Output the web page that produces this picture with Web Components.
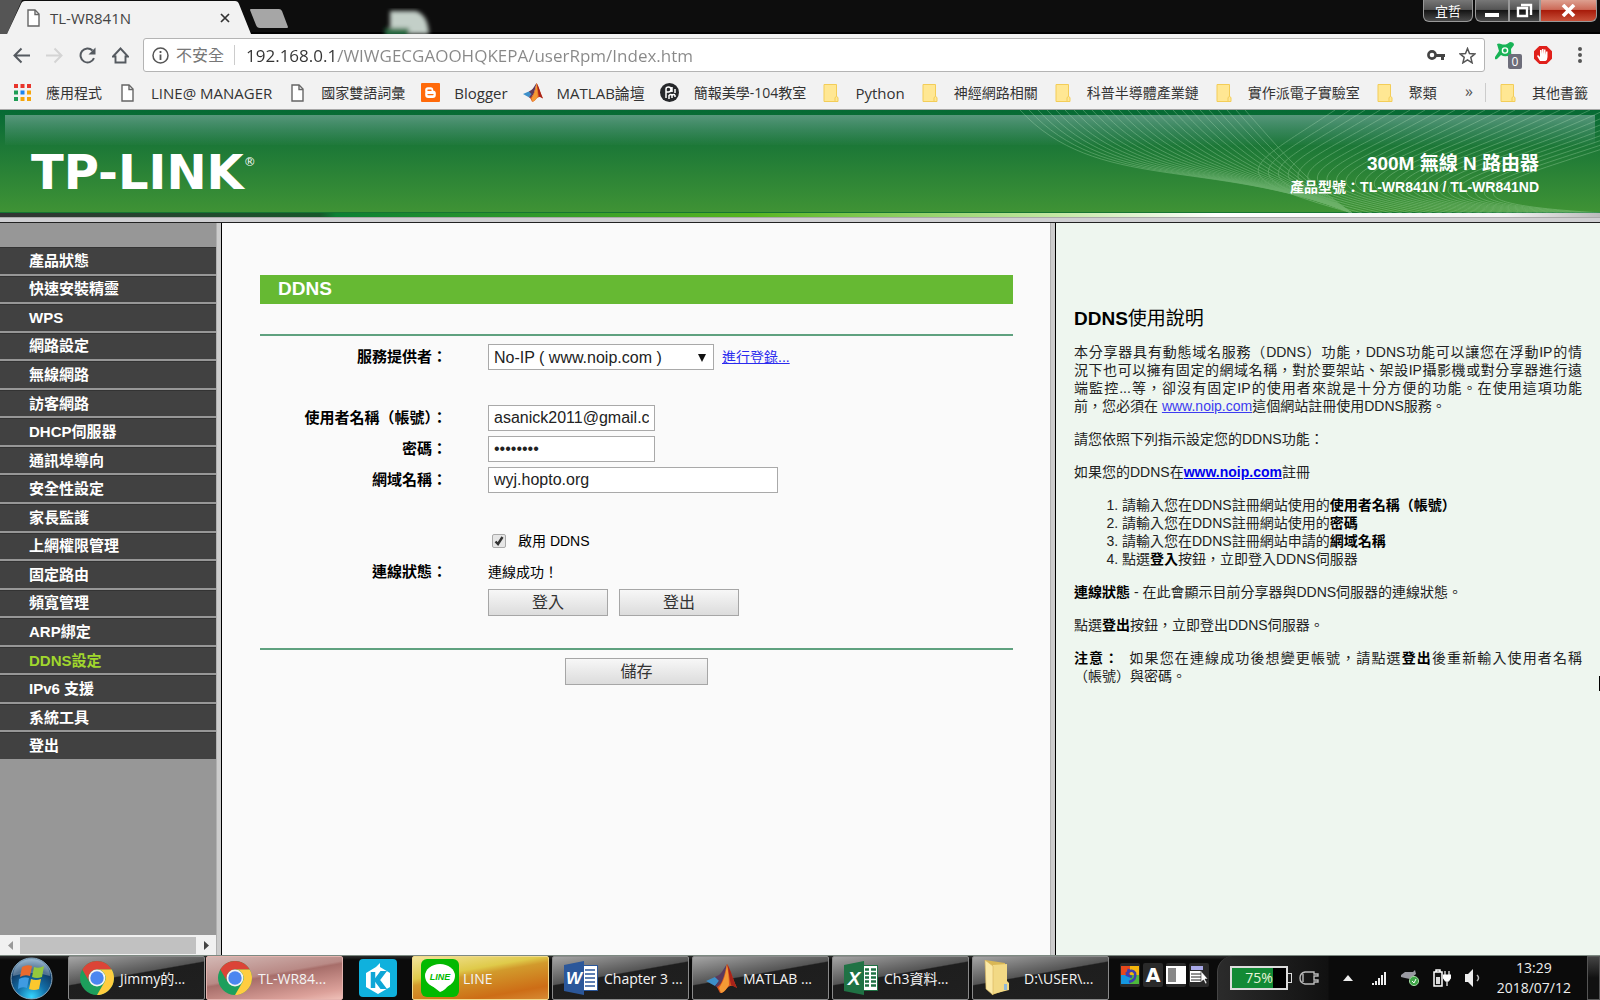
<!DOCTYPE html>
<html lang="zh-Hant">
<head>
<meta charset="utf-8">
<title>TL-WR841N</title>
<style>
  html, body {
    height: 100%;
    margin: 0;
  }
  body {
    --ui: "Open Sans", "Noto Sans CJK TC", sans-serif;
    --web: "Liberation Sans", "Noto Sans CJK TC", sans-serif;
    background: #fafafa;
    display: flex;
    flex-direction: column;
    font-family: var(--web);
    overflow: hidden;
  }
  frame-set {
    flex: 1;
    min-height: 0;
  }
</style>
</head>
<body>
<tab-strip></tab-strip>
<tool-bar></tool-bar>
<bookmark-bar></bookmark-bar>
<router-banner></router-banner>
<frame-set>
  <side-menu slot="menu"></side-menu>
  <ddns-form slot="main"></ddns-form>
  <help-pane slot="help"></help-pane>
</frame-set>
<task-bar></task-bar>

<script>
const icons = {
  page: `<svg width="13" height="18" viewBox="0 0 13 18"><path d="M1 1h7l4 4v12H1z" fill="#fff" stroke="#666" stroke-width="1.4"/><path d="M8 1v4.500h4" fill="none" stroke="#666" stroke-width="1.4"/></svg>`,
  apps: `<svg width="17" height="17" viewBox="0 0 17 17">
    <path d="M0 0h4v4H0zM6.500 0h4v4h-4zM13 0h4v4h-4z" fill="#e8352c"/>
    <path d="M0 6.500h4v4H0zM0 13h4v4H0z" fill="#1f9d55"/><path d="M6.500 6.500h4v4h-4z" fill="#1a84f0"/>
    <path d="M13 6.500h4v4h-4zM6.500 13h4v4h-4zM13 13h4v4h-4z" fill="#f5a50b"/></svg>`,
  blogger: `<svg width="19" height="19" viewBox="0 0 19 19"><rect width="19" height="19" rx="1" fill="#ff6a0a"/>
    <rect x="4.200" y="4.200" width="8" height="6" rx="2.600" fill="#fff"/><rect x="4.200" y="7.500" width="10.600" height="7.500" rx="3" fill="#fff"/>
    <path d="M7 7.300h3M7 11.600h5" stroke="#ff6a0a" stroke-width="1.400" stroke-linecap="round"/></svg>`,
  matlab: `<svg width="100%" viewBox="0 0 31 29"><path d="M0 17l9-4 5 3-5 6z" fill="#3d8fc9"/><path d="M9 13l4-2c3-2 5-7 8-11l-4 16-5 8-3-2 4-5z" fill="#5b3a5c"/>
    <path d="M21 0c3 5 6 15 10 24-5-4-8-2-10 0-2 3-4 5-7 5l-3-6c5-2 8-13 10-23z" fill="#d9541e"/><path d="M21 0c-1 9-3 17-8 24l2 5c4-1 6-5 8-8 0-7-1-14-2-21z" fill="#f39a35"/><path d="M21 0c2 6 2 14 4 21l6 3C27 16 25 6 21 0z" fill="#a8231a"/></svg>`,
  pm: `<svg width="19" height="19" viewBox="0 0 19 19"><circle cx="9.500" cy="9.500" r="9.500" fill="#26282b"/>
    <path d="M6 15V6q0-2 2.500-2T11 6.500 8.500 9H6M9 16v-4M9 12.500q2-2 3 0V15m0-2.500q2-2 3 0V14M12 4v5M15 6v4" fill="none" stroke="#fff" stroke-width="1.500"/></svg>`,
  folder: `<svg width="16" height="18" viewBox="0 0 16 18"><path d="M1 .5h12.500v12l1.500 1v4H1z" fill="#ffe793" stroke="#f3cd58"/><path d="M12 17v-3.500l1.500-1" fill="none" stroke="#f3cd58"/></svg>`,
  chrome: `<svg width="34" height="34" viewBox="0 0 34 34"><circle cx="17" cy="17" r="17" fill="#1d9f5c"/>
    <path d="M2.300 8.500A17 17 0 0 1 31.700 8.500H17a8.500 8.500 0 0 0-7.400 12.700z" fill="#db4437"/>
    <path d="M31.700 8.500A17 17 0 0 1 17 34l7.400-12.700A8.500 8.500 0 0 0 17 8.500z" fill="#ffcd40"/>
    <circle cx="17" cy="17" r="8.400" fill="#f4f4f4"/><circle cx="17" cy="17" r="6.700" fill="#4a86f0"/></svg>`,
  kk: `<svg width="38" height="38" viewBox="0 0 38 38"><rect width="38" height="38" rx="4" fill="#0fb1dd"/>
    <path d="M17 8l4-4v4l10 6v14l-12 7-12-7V14z" fill="#fff"/><path d="M14 13v16M26 13h-4l-6 8 6 8h4l-6-8z" fill="#0fa6d6" stroke="#0fa6d6" stroke-width="2"/><path d="M14 13v16" stroke="#0fa6d6" stroke-width="4.500"/></svg>`,
  line: `<svg width="38" height="38" viewBox="0 0 38 38"><rect width="38" height="38" rx="6" fill="#02b901"/>
    <ellipse cx="19" cy="17" rx="15" ry="12" fill="#fff"/><path d="M10 26l9 7q6-2 10-9z" fill="#fff"/>
    <text x="19" y="21" text-anchor="middle" font-family="Liberation Sans" font-weight="bold" font-size="9" fill="#02b901">LINE</text></svg>`,
  word: `<svg width="34" height="34" viewBox="0 0 34 34"><rect x="18" y="4.500" width="15.500" height="25" fill="#fff" stroke="#2b579a"/>
    <path d="M21 9h10M21 13h10M21 17h10M21 21h10M21 25h10" stroke="#2b579a" stroke-width="1.600"/><path d="M0 4l20-4v34L0 30z" fill="#2b579a"/>
    <text x="10" y="23" text-anchor="middle" font-family="Liberation Sans" font-weight="bold" font-size="17" fill="#fff">W</text></svg>`,
  excel: `<svg width="34" height="34" viewBox="0 0 34 34"><rect x="18" y="4.500" width="15.500" height="25" fill="#fff" stroke="#1f7244"/>
    <path d="M21 8.500h4M27 8.500h5M21 12.500h4M27 12.500h5M21 16.500h4M27 16.500h5M21 20.500h4M27 20.500h5M21 24.500h4M27 24.500h5" stroke="#1f7244" stroke-width="2.400"/><path d="M0 4l20-4v34L0 30z" fill="#1f7244"/>
    <text x="10" y="24" text-anchor="middle" font-family="Liberation Sans" font-weight="bold" font-size="19" fill="#fff">X</text></svg>`,
  explorer: `<svg width="26" height="36" viewBox="0 0 26 36"><path d="M1 0l20 3 1 27-14 5z" fill="#d9b755"/><path d="M9 5l14-1v17l2 2v7L9 34z" fill="#f2d985"/>
    <path d="M1 0l8 6v29L2 29z" fill="#fbe9a6" stroke="#d6b45a" stroke-width=".6"/><path d="M20 24h3v6h-3z" fill="#8fb7d8"/></svg>`
};

// Attaches the shadow root of an element and fills it.
function render(el, css, html) {
  const template = document.createElement('template');
  template.innerHTML = `<style>*{box-sizing:border-box}svg{display:block;flex:none}button{font:inherit;border:0;background:none;padding:0;display:flex;align-items:center;justify-content:center}${css}</style>${html}`;
  el.attachShadow({ mode: 'open' });
  el.shadowRoot.appendChild(template.content.cloneNode(true));
}

class TabStrip extends HTMLElement {
  constructor() {
    super();
    render(this, `
      :host { display: flex; height: 34px; background: linear-gradient(#0d0d0d 32px, #000 32px); font-family: var(--ui); }
      .tab { position: relative; width: 252px; height: 34px; display: flex; align-items: center; padding: 2px 22px 0 27px; font-size: 15px; color: #444; }
      .tab span { position: relative; flex: 1; padding-left: 10px; }
      .tab svg, .tab button { position: relative; }
      .tab .shape { position: absolute; left: 0; top: 0; }
      .new { margin: 9px 0 0 -3px; height: 20px; }
      .glow { margin: 8px 0 0 92px; }
      .win { margin-left: auto; display: flex; align-items: flex-start; padding-right: 3px; }
      .win button { height: 22px; border: 1px solid #999; border-top: 0; background: linear-gradient(#777, #555 45%, #151515 50%, #4a4a4a); }
      .win .user { width: 50px; margin-right: 2px; border-radius: 0 0 6px 6px; color: #fff; font-size: 13px; }
      .win .min { width: 34px; border-radius: 0 0 0 6px; }
      .win .max { width: 31px; }
      .win .close { width: 57px; border-radius: 0 0 6px 0; background: linear-gradient(#dda090, #cc6a58 45%, #a81c0b 50%, #c8513a); }
    `, `
      <div class="tab">
        <svg class="shape" width="252" height="34" viewBox="0 0 252 34"><path d="M0 0h22L7 34H0z" fill="#555"/><path d="M7 34L21 4q1-3 4-3h210q3 0 4 3l12 30z" fill="#f2f2f2"/></svg>
        ${icons.page}<span>TL-WR841N</span>
        <button aria-label="關閉分頁"><svg width="10" height="10" viewBox="0 0 10 10"><path d="M1 1l8 8M9 1L1 9" stroke="#333" stroke-width="1.700"/></svg></button>
      </div>
      <button class="new" aria-label="新增分頁"><svg width="40" height="20" viewBox="0 0 40 20"><path d="M1 1q0-1 1-1h28q2 0 3 2l6 16q0 1-1 1H11q-3 0-4-3z" fill="#a6a6a6"/></svg></button>
      <svg class="glow" width="54" height="26" viewBox="0 0 54 26"><defs><filter id="b"><feGaussianBlur stdDeviation="2"/></filter></defs><g filter="url(#b)"><path d="M9 3h26q12 4 13 23H9z" fill="#c3cfc8"/><path d="M4 20h24v8H4z" fill="#2a6e45"/></g></svg>
      <div class="win">
        <button class="user">宜哲</button>
        <button class="min" aria-label="最小化"><svg width="16" height="14" viewBox="0 0 16 14"><path d="M1 9h14v4H1z" fill="#fff"/></svg></button>
        <button class="max" aria-label="還原"><svg width="17" height="16" viewBox="0 0 17 16"><path d="M5 2h10v10M2 5h9v8H2z" fill="none" stroke="#fff" stroke-width="2.400"/></svg></button>
        <button class="close" aria-label="關閉"><svg width="15" height="13" viewBox="0 0 15 13"><path d="M2 1l11 11M13 1L2 12" stroke="#fff" stroke-width="3.600"/></svg></button>
      </div>
    `);
  }
}
customElements.define('tab-strip', TabStrip);

class ToolBar extends HTMLElement {
  constructor() {
    super();
    render(this, `
      :host { display: flex; align-items: center; padding: 4px 16px 0 13px; background: #f2f2f2; font-family: var(--ui); }
      .nav { display: flex; gap: 16px; margin-right: 14px; }
      .nav button { width: 17px; height: 17px; }
      .box { flex: 1; display: flex; align-items: center; height: 34px; background: #fff; border: 1px solid #b4b4b4; border-radius: 3px; padding: 0 8px; }
      .safe { font-size: 16px; color: #777; padding: 0 10px 0 7px; border-right: 1px solid #ccc; line-height: 20px; }
      input { flex: 1; min-width: 0; border: 0; outline: 0; padding: 0 0 0 11px; height: 28px; font-family: "Open Sans", sans-serif; font-size: 17px; -webkit-text-fill-color: transparent; background: linear-gradient(90deg, #333 103px, #888 103px); -webkit-background-clip: text; background-clip: text; }
      .box button + button { margin-left: 14px; }
      .ext { display: flex; align-items: center; gap: 12px; margin-left: 10px; }
      .av { position: relative; width: 27px; height: 27px; align-items: flex-start; justify-content: flex-start; }
      .av span { position: absolute; right: 0; bottom: 0; width: 14px; height: 15px; border-radius: 2px; background: #6d6d7a; color: #fff; font-size: 12px; line-height: 15px; }
      .menu { margin-left: 12px; width: 8px; }
    `, `
      <div class="nav">
        <button aria-label="上一頁"><svg width="17" height="17" viewBox="0 0 17 17"><path d="M17 8.500H2M8.500 1.500l-7 7 7 7" fill="none" stroke="#555a60" stroke-width="2"/></svg></button>
        <button aria-label="下一頁"><svg width="17" height="17" viewBox="0 0 17 17"><path d="M0 8.500h15M8.500 1.500l7 7-7 7" fill="none" stroke="#d4d4d4" stroke-width="2"/></svg></button>
        <button aria-label="重新載入"><svg width="17" height="17" viewBox="0 0 17 17"><path d="M15 11.200A7 7 0 1 1 13.500 3.500" fill="none" stroke="#555a60" stroke-width="2"/><path d="M16.500.5v7H9.500z" fill="#555a60"/></svg></button>
        <button aria-label="首頁"><svg width="17" height="17" viewBox="0 0 17 17"><path d="M1 9.500l7.500-8 7.500 8h-2.500V15.500h-10V9.500z" fill="none" stroke="#555a60" stroke-width="1.900"/></svg></button>
      </div>
      <div class="box">
        <svg width="17" height="17" viewBox="0 0 17 17"><circle cx="8.500" cy="8.500" r="7.500" fill="none" stroke="#555" stroke-width="1.500"/><path d="M8.500 7.500v5.500M8.500 4v2" stroke="#555" stroke-width="1.800"/></svg>
        <span class="safe">不安全</span>
        <input aria-label="網址" value="192.168.0.1/WIWGECGAOOHQKEPA/userRpm/Index.htm">
        <button aria-label="密碼"><svg width="18" height="12" viewBox="0 0 18 12"><circle cx="5" cy="6" r="3.600" fill="none" stroke="#444" stroke-width="2.600"/><path d="M9 5h9v3h-1v3h-3V8H9z" fill="#444"/></svg></button>
        <button aria-label="加入書籤"><svg width="17" height="17" viewBox="0 0 17 17"><path d="M8.500 1.500l2 5 5.500.4-4.200 3.500 1.300 5.400-4.600-3-4.600 3 1.300-5.400L1 6.900l5.500-.4z" fill="none" stroke="#555" stroke-width="1.500"/></svg></button>
      </div>
      <div class="ext">
        <button class="av" aria-label="擴充功能"><svg width="20" height="20" viewBox="0 0 20 20"><path d="M2 2q2-1 4 0 3 1 6 0l3-2q4 0 4 3l-3 4q0 5 1 8l-5-1q-3 1-6-1l-4 4q-3 1-2-2l4-6z" fill="#18b356"/><circle cx="10" cy="8.500" r="2.600" fill="none" stroke="#fff" stroke-width="1.400"/></svg><span>0</span></button>
        <button aria-label="廣告攔截"><svg width="18" height="18" viewBox="0 0 18 18"><path d="M5.300 0h7.400L18 5.300v7.400L12.700 18H5.300L0 12.700V5.300z" fill="#e0201b"/><path d="M6 15l-3-5 1-1 2 2V4h1.500v4L8 3h1.500v5L10 3.500h1.500V9l.5-3.500h1.500V11q0 3-2 4z" fill="#fff"/></svg></button>
        <button class="menu" aria-label="選單"><svg width="4" height="16" viewBox="0 0 4 16"><path d="M2 0a2 2 0 1 1 0 4 2 2 0 0 1 0-4zM2 6a2 2 0 1 1 0 4 2 2 0 0 1 0-4zM2 12a2 2 0 1 1 0 4 2 2 0 0 1 0-4z" fill="#555"/></svg></button>
      </div>
    `);
  }
}
customElements.define('tool-bar', ToolBar);

class BookmarkItem extends HTMLElement {
  constructor() {
    super();
    render(this, `
      :host { display: block; }
      :host([large]) { font-size: 15px; }
      a { display: flex; align-items: center; gap: 14px; color: #333; text-decoration: none; white-space: nowrap; }
      i { width: 20px; display: flex; justify-content: center; }
    `, `<a href="#"><i>${icons[this.getAttribute('icon')]}</i><slot></slot></a>`);
  }
}
customElements.define('bookmark-item', BookmarkItem);

class BookmarkBar extends HTMLElement {
  constructor() {
    super();
    const marks = [
      ['apps', '應用程式'], ['page', 'LINE@ MANAGER', 'large'], ['page', '國家雙語詞彙'], ['blogger', 'Blogger', 'large'],
      ['matlab', 'MATLAB論壇', 'large'], ['pm', '簡報美學-104教室'], ['folder', 'Python', 'large'], ['folder', '神經網路相關'],
      ['folder', '科普半導體產業鏈'], ['folder', '實作派電子實驗室'], ['folder', '聚類']
    ];
    render(this, `
      :host { display: flex; align-items: center; gap: 15px; height: 33px; padding: 4px 12px 0; background: #f2f2f2; border-bottom: 1px solid #a8a8a8; font: 14px/20px var(--ui); color: #333; }
      .more { margin-left: auto; font-size: 16px; color: #555; padding: 0 12px 4px; }
      hr { width: 1px; height: 19px; border: 0; margin: 0 -3px 0 -15px; background: #ccc; }
    `, `${marks.map(([icon, text, size = '']) => `<bookmark-item icon="${icon}" ${size}>${text}</bookmark-item>`).join('')}
      <button class="more" aria-label="更多書籤">»</button><hr><bookmark-item icon="folder">其他書籤</bookmark-item>`);
  }
}
customElements.define('bookmark-bar', BookmarkBar);

class RouterBanner extends HTMLElement {
  constructor() {
    super();
    // two bundles of thin curves that meet at the bottom edge
    let waves = '';
    for (let i = 0; i < 26; i++) {
      waves += `<path d="M${i * 9} 0C${75 + i * 8} ${82 - i} ${190 + i * 4} ${48 + i} 332 103"/>`;
    }
    for (let i = 0; i < 26; i++) {
      waves += `<path d="M${315 + i * 15} 0C${225 + i * 13} 60 ${195 + i * 6} ${64 + i} ${332 + i * 10} 103"/>`;
    }
    render(this, `
      :host { display: block; }
      .top { position: relative; height: 103px; color: #fff; background: linear-gradient(#066a34 0, #1b7737 34px, #3f9335 100%); display: flex; align-items: center; justify-content: space-between; padding: 27px 61px 0 31px; border-bottom: 1px solid #167532; }
      .shine { position: absolute; left: 5px; right: 5px; top: 5px; height: 30px; background: linear-gradient(#57977b, rgba(60, 135, 85, .1)); }
      .waves { position: absolute; right: 0; top: 0; fill: none; stroke: #c8f0c8; stroke-width: .8; opacity: .35; }
      .logo { position: relative; font: bold 48px/40px "DejaVu Sans", sans-serif; display: flex; margin-bottom: 6px; }
      .logo sup { font-size: 12px; line-height: 20px; font-weight: normal; }
      .model { position: relative; font-weight: bold; font-size: 14px; line-height: 22px; text-align: right; }
      h1 { font-size: 19px; line-height: 24px; margin: 0; }
      .strip { height: 4px; background: linear-gradient(90deg, #333 0, #17572a 20%, #0c8033 21%, #57b520 47%, #c4e8a4 66%, #fff 76%, #f4f4f4 94%, #bbb); }
      .edge { height: 6px; background: #cfcfd2; border-top: 1px solid #a9a9a9; border-bottom: 1px solid #222; }
    `, `
      <div class="top">
        <div class="shine"></div>
        <svg class="waves" width="580" height="103" viewBox="0 0 580 103">${waves}</svg>
        <div class="logo">TP-LINK<sup>®</sup></div>
        <div class="model"><h1>300M 無線 N 路由器</h1>產品型號：TL-WR841N / TL-WR841ND</div>
      </div>
      <div class="strip"></div>
      <div class="edge"></div>
    `);
  }
}
customElements.define('router-banner', RouterBanner);

class FrameSet extends HTMLElement {
  constructor() {
    super();
    render(this, `
      :host { display: grid; grid-template-columns: 216px 6px 1fr 6px 34%; }
      .bar { background: #ccc; border-left: 1px solid #b0b0b0; border-right: 1px solid #000; }
    `, `<slot name="menu"></slot><div class="bar"></div><slot name="main"></slot><div class="bar"></div><slot name="help"></slot>`);
  }
}
customElements.define('frame-set', FrameSet);

class SideMenu extends HTMLElement {
  constructor() {
    super();
    const items = ['產品狀態', '快速安裝精靈', 'WPS', '網路設定', '無線網路', '訪客網路', 'DHCP伺服器', '通訊埠導向', '安全性設定',
      '家長監護', '上網權限管理', '固定路由', '頻寬管理', 'ARP綁定', 'DDNS設定', 'IPv6 支援', '系統工具', '登出'];
    render(this, `
      :host { display: flex; flex-direction: column; background: #979797; padding-top: 24px; }
      nav { display: grid; grid-auto-rows: 1fr; height: 514px; }
      a { display: flex; align-items: center; padding-left: 29px; background: #414141; border-top: 1px solid #333; border-bottom: 2px solid #979797; color: #fff; font-size: 15px; line-height: 20px; font-weight: bold; text-decoration: none; }
      a.on { color: #a0d72d; }
      .scroll { margin-top: auto; height: 20px; display: flex; background: #f1f1f1; padding: 2px 0 1px; }
      .scroll button { width: 20px; }
      .thumb { flex: 1; background: #c1c1c1; }
    `, `
      <nav>${items.map(t => `<a href="#"${t === 'DDNS設定' ? ' class="on"' : ''}>${t}</a>`).join('')}</nav>
      <div class="scroll">
        <button aria-label="向左捲動"><svg width="5" height="9" viewBox="0 0 5 9"><path d="M5 0v9L0 4.500z" fill="#999"/></svg></button>
        <div class="thumb"></div>
        <button aria-label="向右捲動"><svg width="5" height="9" viewBox="0 0 5 9"><path d="M0 0v9l5-4.500z" fill="#444"/></svg></button>
      </div>
    `);
  }
}
customElements.define('side-menu', SideMenu);

class DdnsForm extends HTMLElement {
  constructor() {
    super();
    render(this, `
      :host { display: block; background: #fafafa; padding: 52px 37px 0 38px; font-size: 14px; line-height: 20px; color: #000; }
      h2 { margin: 0 0 30px; height: 29px; line-height: 27px; padding-left: 18px; background: #66b933; color: #fff; font-size: 19px; }
      hr { height: 2px; margin: 0; border: 0; background: #5fa17f; }
      .grid { display: grid; grid-template-columns: 187px 1fr; column-gap: 41px; row-gap: 5px; align-items: center; padding: 8px 0 32px; }
      .grid > label, .grid > b { font-weight: bold; font-size: 15px; text-align: right; }
      .row { display: flex; align-items: center; gap: 8px; }
      .space { grid-column: 1 / -1; height: 25px; }
      .end { grid-column: 2; }
      input[type=text], input[type=password], select { height: 26px; margin: 0; border: 1px solid #a9a9a9; border-radius: 0; background: #fff; color: #222; padding: 0 5px; font: 16px "Liberation Sans", sans-serif; width: 167px; }
      #domain { width: 290px; }
      .pick { position: relative; }
      .pick svg { position: absolute; right: 8px; top: 10px; pointer-events: none; }
      select { width: 226px; appearance: none; display: block; }
      a { color: #2a2aee; }
      input[type=checkbox] { appearance: none; width: 14px; height: 14px; margin: 0 4px; border: 1px solid #aaa; border-radius: 2px; background: url('data:image/svg+xml,<svg xmlns="http://www.w3.org/2000/svg" viewBox="0 0 12 12"><path d="M2.500 6.500l2.500 2.500 4.500-7" fill="none" stroke="%23333" stroke-width="2.400"/></svg>') #e6e6e6; }
      button { width: 120px; height: 27px; border: 1px solid #a6a6a6; background: linear-gradient(#f7f7f7, #dcdcdc); font-size: 16px; color: #333; }
      .wide { gap: 11px; padding-top: 2px; }
      .save { width: 143px; margin: 8px auto 0; }
      .tick { height: 26px; margin-bottom: 3px; }
    `, `
      <h2>DDNS</h2>
      <hr>
      <form>
        <div class="grid">
          <label for="provider">服務提供者：</label>
          <div class="row"><div class="pick"><select id="provider"><option>No-IP ( www.noip.com )</option></select><svg width="8" height="8" viewBox="0 0 8 8"><path d="M0 0h8L4 8z" fill="#111"/></svg></div><a href="#">進行登錄...</a></div>
          <div class="space"></div>
          <label for="user">使用者名稱（帳號）：</label>
          <input id="user" type="text" value="asanick2011@gmail.com">
          <label for="pass">密碼：</label>
          <input id="pass" type="password" value="12345678">
          <label for="domain">網域名稱：</label>
          <input id="domain" type="text" value="wyj.hopto.org">
          <div class="space"></div>
          <div class="row end tick"><input id="enable" type="checkbox" checked><label for="enable">啟用 DDNS</label></div>
          <b>連線狀態：</b>
          <span>連線成功！</span>
          <div class="row wide end"><button type="button">登入</button><button type="button">登出</button></div>
        </div>
        <hr>
        <button class="save" type="button">儲存</button>
      </form>
    `);
  }
}
customElements.define('ddns-form', DdnsForm);

class HelpPane extends HTMLElement {
  constructor() {
    super();
    render(this, `
      :host { display: block; position: relative; background: #eef6ef; padding: 84px 18px 0 18px; font-size: 14px; line-height: 18px; color: #222; }
      h2 { margin: 0 0 12px; font-size: 19px; line-height: 24px; font-weight: normal; color: #000; }
      p, ol { margin: 0 0 15px; }
      ol { padding-left: 48px; }
      .full { display: block; text-align: justify; text-align-last: justify; white-space: nowrap; }
      a { color: #3c3cf0; }
      b { color: #000; }
      b a { color: #0000ee; }
      .caret { position: absolute; right: 0; top: 453px; width: 1px; height: 15px; background: #000; }
    `, `
      <h2><b>DDNS</b>使用說明</h2>
      <p><span class="full">本分享器具有動態域名服務（DDNS）功能，DDNS功能可以讓您在浮動IP的情</span><span class="full">況下也可以擁有固定的網域名稱，對於要架站、架設IP攝影機或對分享器進行遠</span><span class="full">端監控...等，卻沒有固定IP的使用者來說是十分方便的功能。在使用這項功能</span>前，您必須在 <a href="#">www.noip.com</a>這個網站註冊使用DDNS服務。</p>
      <p>請您依照下列指示設定您的DDNS功能：</p>
      <p>如果您的DDNS在<b><a href="#">www.noip.com</a></b>註冊</p>
      <ol>
        <li>請輸入您在DDNS註冊網站使用的<b>使用者名稱（帳號）</b></li>
        <li>請輸入您在DDNS註冊網站使用的<b>密碼</b></li>
        <li>請輸入您在DDNS註冊網站申請的<b>網域名稱</b></li>
        <li>點選<b>登入</b>按鈕，立即登入DDNS伺服器</li>
      </ol>
      <p><b>連線狀態</b> - 在此會顯示目前分享器與DDNS伺服器的連線狀態。</p>
      <p>點選<b>登出</b>按鈕，立即登出DDNS伺服器。</p>
      <p><span class="full"><b>注意：</b>&nbsp; 如果您在連線成功後想變更帳號，請點選<b>登出</b>後重新輸入使用者名稱</span>（帳號）與密碼。</p>
      <div class="caret"></div>
    `);
  }
}
customElements.define('help-pane', HelpPane);

class TaskButton extends HTMLElement {
  constructor() {
    super();
    render(this, `
      :host { display: block; width: 137px; }
      button { width: 100%; height: 44px; justify-content: flex-start; gap: 6px; padding: 0 8px 0 11px; border: 1px solid #8a8a8a; border-radius: 2px; color: #f4f4f4; font-size: 14px; white-space: nowrap; background: linear-gradient(170deg, #a5a5a5 0, #555 42%, #1e1e1e 44%, #202020 100%); }
      :host([tone=red]) button { border-color: #e4b3ae; background: linear-gradient(170deg, #d3b8b4 0, #b98a86 42%, #a76e6a 46%, #dca19a 85%, #efc0b8); }
      :host([tone=gold]) button { padding-left: 8px; gap: 4px; border-color: #f1d98c; background: linear-gradient(170deg, #f2e49a 0, #dfca4a 34%, #d29a2c 44%, #cd6d16 80%, #d68a34); }
      i { width: 34px; display: flex; justify-content: center; }
      :host([tone=gold]) i { width: 38px; }
      :host([icon=explorer]) i { width: 26px; margin-right: 8px; }
      :host([icon=matlab]) i { width: 31px; margin-left: 2px; }
    `, `<button><i>${icons[this.getAttribute('icon')]}</i><slot></slot></button>`);
  }
}
customElements.define('task-button', TaskButton);

class TaskBar extends HTMLElement {
  constructor() {
    super();
    render(this, `
      :host { display: flex; height: 44px; background: linear-gradient(#2c2c2c, #0b0b0b 4px); border-top: 1px solid #7d8a82; font-family: var(--ui); color: #eee; }
      .orb { width: 43px; margin: 0 15px 0 10px; }
      .tasks { display: flex; gap: 3px; }
      .tasks task-button:first-child { margin-right: -2px; }
      .kk { width: 63px; }
      .ime { display: flex; align-items: center; margin: 0 8px 6px 11px; gap: 3px; }
      .ime button { width: 20px; height: 24px; border-radius: 2px; background: #2a2a2a; }
      .tray { flex: 1; display: flex; align-items: center; border-radius: 16px 0 0 0; border-left: 1px solid #444; background: linear-gradient(90deg, #2b2b2b, #111 110px, #0b0b0b 111px); padding-left: 12px; }
      .battery { width: 58px; height: 24px; border: 2px solid #ddd; background: linear-gradient(90deg, #128a35 41px, #000 41px); font-size: 14px; line-height: 20px; text-align: center; color: #e8f5d8; }
      .nub { width: 4px; height: 10px; border: 1px solid #ddd; border-left: 0; margin-right: 7px; }
      .tray button { height: 24px; }
      .time { margin-left: auto; padding-right: 16px; text-align: center; font-size: 14px; line-height: 20px; }
      .peek { width: 13px; border: 1px solid #555; background: linear-gradient(#444, #111 50%); }
      .icons { display: flex; align-items: center; gap: 14px; margin-left: 24px; }
    `, `
      <button class="orb" aria-label="開始"><svg width="43" height="43" viewBox="0 0 43 43">
        <defs><radialGradient id="o" cx=".5" cy=".95" r=".9"><stop offset="0" stop-color="#35d6ff"/><stop offset=".4" stop-color="#136fa8"/><stop offset=".75" stop-color="#0f3c68"/><stop offset="1" stop-color="#6b93b5"/></radialGradient></defs>
        <circle cx="21.500" cy="21.500" r="20.500" fill="url(#o)" stroke="#8aa9bf"/><path d="M3 19a18.500 17 0 0 1 37 0q-18-6-37 0z" fill="#fff" opacity=".28"/>
        <path d="M12 10q5-3 10-1l-2 10q-5-2-10 1z" fill="#ea6a2e"/><path d="M24 10q5 2 10-1l-2 11q-5 2-10 0z" fill="#94c83d"/><path d="M9 22q5-3 10-1l-2 10q-5-2-9 1z" fill="#3f9be2"/><path d="M21 22q5 2 10 0l-2 10q-5 2-10 0z" fill="#fbc82e"/></svg></button>
      <div class="tasks">
        <task-button icon="chrome">Jimmy的...</task-button>
        <task-button icon="chrome" tone="red">TL-WR84...</task-button>
        <button class="kk" aria-label="KKBOX">${icons.kk}</button>
        <task-button icon="line" tone="gold">LINE</task-button>
        <task-button icon="word">Chapter 3 ...</task-button>
        <task-button icon="matlab">MATLAB ...</task-button>
        <task-button icon="excel">Ch3資料...</task-button>
        <task-button icon="explorer">D:\\USER\\...</task-button>
      </div>
      <div class="ime">
        <button aria-label="輸入法"><svg width="18" height="18" viewBox="0 0 18 18"><path d="M0 0h9v9H0z" fill="#e8491c"/><path d="M9 0h9v9H9z" fill="#f4b60c"/><path d="M0 9h9v9H0z" fill="#1597e0"/><path d="M9 9h9v9H9z" fill="#4db83c"/><path d="M5 8q6-6 9-1 2 7-6 9M8 3l-2 6 5 2" fill="none" stroke="#3d3fb0" stroke-width="2.600"/></svg></button>
        <button aria-label="英文"><svg width="20" height="24" viewBox="0 0 20 24"><text x="10" y="19" text-anchor="middle" font-family="DejaVu Sans" font-weight="bold" font-size="19" fill="#fff">A</text></svg></button>
        <button aria-label="半形"><svg width="20" height="18" viewBox="0 0 20 18"><path d="M0 0h20v18H0z" fill="#fff"/><path d="M2 2h8v14H2z" fill="#888"/></svg></button>
        <button aria-label="功能選單"><svg width="18" height="18" viewBox="0 0 18 18"><path d="M1 0h12v4H1z" fill="#a9a9e8"/><path d="M0 5h12v11H0z" fill="#fff"/><path d="M1 8h10M1 11h10M1 14h10" stroke="#222"/><path d="M11 5v11l2.500-2 2 4 1.500-1-2-4h3z" fill="#fff" stroke="#000" stroke-width=".5"/></svg></button>
      </div>
      <div class="tray">
        <div class="battery">75%</div><div class="nub"></div>
        <svg width="20" height="16" viewBox="0 0 20 16"><path d="M6 2h9v2h4v2h-4v4h4v2h-4v2H6Q1 13 1 8t5-6zM4 4v8" fill="none" stroke="#bbb" stroke-width="1.400"/></svg>
        <div class="icons">
          <button aria-label="顯示隱藏的圖示"><svg width="10" height="6" viewBox="0 0 10 6"><path d="M0 6l5-6 5 6z" fill="#eee"/></svg></button>
          <svg width="20" height="13" viewBox="0 0 20 13"><path d="M5 11h2v2H5zM8 9h2v4H8zM11 6h2v7h-2zM14 3h2v10h-2zM17 0h2v13h-2z" fill="#eee"/></svg>
          <svg width="18" height="16" viewBox="0 0 18 16"><path d="M0 5l4-3h8l2-2 1 4-6 5-5-1-4-1z" fill="#9a9aa2"/><circle cx="13" cy="11" r="4.600" fill="#3fa648" stroke="#9fd89f"/><path d="M11 11l2 2 2-4" fill="none" stroke="#fff"/></svg>
          <svg width="18" height="18" viewBox="0 0 18 18"><path d="M1 3h8v14H1zM3 1h4v2H3z" fill="#111" stroke="#fff" stroke-width="1.500"/><path d="M3 8h4v7H3z" fill="#ddd"/><path d="M12 2v4M16 2v4M10.500 6h7v3l-2 3h-3l-2-3zM14 12v5" fill="#fff" stroke="#fff" stroke-width="1.200"/></svg>
          <svg width="15" height="18" viewBox="0 0 15 18"><path d="M0 5h3l5-5v18l-5-5H0z" fill="#eee"/><path d="M12 6q3 3 0 6" fill="none" stroke="#bbb" stroke-width="1.500"/></svg>
        </div>
        <div class="time">13:29<br>2018/07/12</div>
      </div>
      <button class="peek" aria-label="顯示桌面"></button>
    `);
  }
}
customElements.define('task-bar', TaskBar);
</script>
</body>
</html>
